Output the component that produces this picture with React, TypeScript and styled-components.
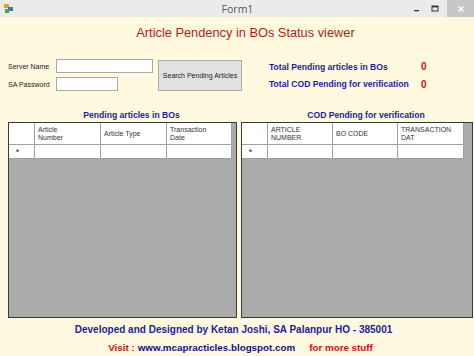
import React from 'react'
import styled, { createGlobalStyle } from 'styled-components'

const GlobalStyle = createGlobalStyle`
  html, body {
    margin: 0;
    padding: 0;
    width: 474px;
    height: 356px;
    overflow: hidden;
  }
  * {
    box-sizing: border-box;
  }
`

const Window = styled.div`
  width: 474px;
  height: 356px;
  display: flex;
  flex-direction: column;
  font-family: 'Liberation Sans', Arial, sans-serif;
`

const TitleBar = styled.div`
  height: 17px;
  background: #ebebeb;
  display: flex;
  align-items: center;
`

const AppIcon = styled.svg`
  width: 9px;
  height: 9px;
  margin-left: 4px;
`

const Caption = styled.div`
  flex: 1;
  text-align: center;
  font-family: 'Open Sans', 'Noto Sans', sans-serif;
  font-size: 10.5px;
  color: #555;
  padding-left: 54px;
`

const WinButton = styled.div<{ $close?: boolean }>`
  width: ${(p) => (p.$close ? '27px' : '18px')};
  height: 17px;
  display: flex;
  align-items: center;
  justify-content: center;
  background: ${(p) => (p.$close ? '#c7c7c7' : 'transparent')};
  margin-left: ${(p) => (p.$close ? '3px' : '0')};
`

const Form = styled.div`
  flex: 1;
  background: #fff9df;
  display: flex;
  flex-direction: column;
  padding: 0 1px 0 8px;
`

const Heading = styled.h1`
  margin: 8px 0 0;
  height: 15px;
  font-size: 12.8px;
  font-weight: normal;
  color: #b01c1c;
  text-align: center;
  line-height: 15px;
  padding-left: 10px;
  font-family: 'Liberation Sans', Arial, sans-serif;
`

const Controls = styled.div`
  margin-top: 19px;
  display: flex;
  height: 31px;
`

const Fields = styled.div`
  display: flex;
  flex-direction: column;
  gap: 4px;
`

const FieldRow = styled.div`
  display: flex;
  align-items: center;
`

const Label = styled.span`
  width: 48px;
  font-size: 7px;
  color: #222;
  white-space: nowrap;
`

const TextBox = styled.div<{ $w: number; $h: number }>`
  width: ${(p) => p.$w}px;
  height: ${(p) => p.$h}px;
  background: #fff;
  border: 1px solid #a9a9a9;
`

const SearchButton = styled.div`
  margin-left: 5px;
  width: 84px;
  height: 31px;
  margin-top: 1px;
  background: #e1e1e1;
  border: 1px solid #adadad;
  display: flex;
  align-items: center;
  justify-content: center;
  font-size: 7px;
  color: #222;
  white-space: nowrap;
`

const Stats = styled.div`
  margin-left: 27px;
  display: flex;
  flex-direction: column;
  gap: 6px;
  padding-top: 2px;
`

const StatRow = styled.div`
  display: flex;
  align-items: center;
  height: 13px;
`

const StatLabel = styled.span`
  width: 152px;
  font-size: 8.6px;
  font-weight: bold;
  color: #1c1ca0;
  white-space: nowrap;
`

const StatValue = styled.span`
  font-size: 10px;
  font-weight: bold;
  color: #cc1111;
`

const Panels = styled.div`
  margin-top: 18px;
  display: flex;
  gap: 4px;
`

const Panel = styled.div<{ $w: number }>`
  width: ${(p) => p.$w}px;
  display: flex;
  flex-direction: column;
`

const PanelTitle = styled.div`
  height: 14px;
  line-height: 14px;
  text-align: center;
  padding-left: 18px;
  font-size: 8.6px;
  font-weight: bold;
  color: #1c1ca0;
  white-space: nowrap;
`

const Grid = styled.div`
  height: 196px;
  background: #ababab;
  border: 1px solid #3a3a3a;
  display: flex;
  flex-direction: column;
`

const GridRow = styled.div<{ $h: number }>`
  display: flex;
  height: ${(p) => p.$h}px;
`

const Cell = styled.div<{ $w: number }>`
  width: ${(p) => p.$w}px;
  background: #fff;
  border-right: 1px solid #a0a0a0;
  border-bottom: 1px solid #a0a0a0;
  font-size: 7px;
  line-height: 8px;
  color: #333;
  padding: 1px 3px 0;
  display: flex;
  align-items: center;
  white-space: pre-line;
  overflow: hidden;
`

const RowHeader = styled(Cell)`
  justify-content: center;
  font-size: 9px;
  color: #222;
  padding: 0 8px 0 0;
`

const Footer = styled.div`
  margin-top: 2px;
  display: flex;
  flex-direction: column;
  align-items: center;
`

const Credit = styled.div`
  height: 19px;
  line-height: 19px;
  margin-right: 14px;
  font-size: 10px;
  font-weight: bold;
  color: #1c1ca0;
  white-space: nowrap;
`

const Visit = styled.div`
  height: 18px;
  line-height: 18px;
  font-size: 9.8px;
  font-weight: bold;
  white-space: nowrap;
  display: flex;
  gap: 3px;
`

const Red = styled.span`
  color: #d01010;
`

const Navy = styled.span<{ $gap?: number }>`
  color: #101080;
  margin-right: ${(p) => p.$gap ?? 0}px;
`

type Col = { title: string; w: number }

const DataGrid = ({ cols }: { cols: Col[] }) => (
  <Grid>
    <GridRow $h={22}>
      <Cell $w={26} />
      {cols.map((c) => (
        <Cell key={c.title} $w={c.w}>
          {c.title}
        </Cell>
      ))}
    </GridRow>
    <GridRow $h={14}>
      <RowHeader $w={26}>*</RowHeader>
      {cols.map((c) => (
        <Cell key={c.title} $w={c.w} />
      ))}
    </GridRow>
  </Grid>
)

const leftCols: Col[] = [
  { title: 'Article\nNumber', w: 66 },
  { title: 'Article Type', w: 66 },
  { title: 'Transaction\nDate', w: 65 },
]

const rightCols: Col[] = [
  { title: 'ARTICLE\nNUMBER', w: 65 },
  { title: 'BO CODE', w: 65 },
  { title: 'TRANSACTION\nDAT', w: 66 },
]

export default function App() {
  return (
    <Window>
      <GlobalStyle />
      <TitleBar>
        <AppIcon viewBox="0 0 9 9">
          <rect x="0" y="0" width="5" height="4" fill="#e0a030" />
          <rect x="4" y="3" width="5" height="4" fill="#3a78d0" />
          <rect x="1" y="5" width="4" height="4" fill="#50a040" />
        </AppIcon>
        <Caption>Form1</Caption>
        <WinButton>
          <svg width="8" height="8" viewBox="0 0 8 8">
            <rect x="1" y="5" width="5" height="1.3" fill="#333" />
          </svg>
        </WinButton>
        <WinButton>
          <svg width="8" height="8" viewBox="0 0 8 8">
            <rect x="1" y="1" width="6" height="5" fill="none" stroke="#333" strokeWidth="1" />
            <rect x="1" y="1" width="6" height="1.4" fill="#333" />
          </svg>
        </WinButton>
        <WinButton $close>
          <svg width="8" height="8" viewBox="0 0 8 8">
            <path d="M1.5 1.5 L6.5 6.5 M6.5 1.5 L1.5 6.5" stroke="#fff" strokeWidth="1.4" />
          </svg>
        </WinButton>
      </TitleBar>
      <Form>
        <Heading>Article Pendency in BOs Status viewer</Heading>
        <Controls>
          <Fields>
            <FieldRow>
              <Label>Server Name</Label>
              <TextBox $w={97} $h={14} />
            </FieldRow>
            <FieldRow>
              <Label>SA Password</Label>
              <TextBox $w={62} $h={14} />
            </FieldRow>
          </Fields>
          <SearchButton>Search Pending Articles</SearchButton>
          <Stats>
            <StatRow>
              <StatLabel>Total Pending articles in BOs</StatLabel>
              <StatValue>0</StatValue>
            </StatRow>
            <StatRow>
              <StatLabel>Total COD Pending for verification</StatLabel>
              <StatValue>0</StatValue>
            </StatRow>
          </Stats>
        </Controls>
        <Panels>
          <Panel $w={229}>
            <PanelTitle>Pending articles in BOs</PanelTitle>
            <DataGrid cols={leftCols} />
          </Panel>
          <Panel $w={232}>
            <PanelTitle>COD Pending for verification</PanelTitle>
            <DataGrid cols={rightCols} />
          </Panel>
        </Panels>
        <Footer>
          <Credit>Developed and Designed by Ketan Joshi, SA Palanpur HO - 385001</Credit>
          <Visit>
            <Red>Visit :</Red>
            <Navy $gap={11}>www.mcapracticles.blogspot.com</Navy>
            <Red>for more stuff</Red>
          </Visit>
        </Footer>
      </Form>
    </Window>
  )
}
